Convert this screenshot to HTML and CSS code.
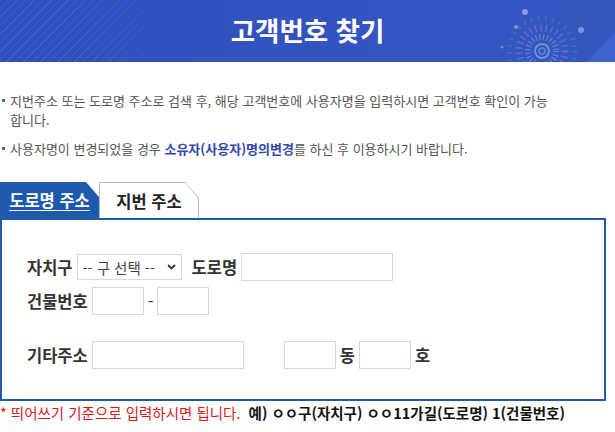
FILE: index.html
```html
<!DOCTYPE html>
<html lang="ko">
<head>
    <meta charset="UTF-8">
    <meta name="viewport" content="width=device-width, initial-scale=1.0">
    <title>고객번호 찾기</title>
    <link rel="stylesheet" href="styles.css">
</head>
<body>

<div class="top-title">
    <h1>고객번호 찾기</h1>
    <svg class="burst" width="120" height="62" viewBox="0 0 120 62">
        <g fill="none" stroke="#9fb2ee">
            <circle cx="62" cy="51" r="7" stroke-width="2" opacity=".6"/>
            <circle cx="62" cy="51" r="3" stroke-width="1.5" opacity=".5"/>
            <circle cx="62" cy="51" r="14" stroke-width="6" stroke-dasharray="1.3 2.4" opacity=".45"/>
            <circle cx="62" cy="51" r="23" stroke-width="7" stroke-dasharray="1.3 4" opacity=".35"/>
            <circle cx="62" cy="51" r="33" stroke-width="5" stroke-dasharray="1.2 6" opacity=".25"/>
        </g>
        <g fill="#a9baf0">
            <circle cx="45" cy="12" r="3" opacity=".7"/>
            <circle cx="101" cy="30" r="3" opacity=".6"/>
            <circle cx="36" cy="27" r="2" opacity=".6"/>
            <circle cx="22" cy="47" r="1.5" opacity=".5"/>
        </g>
    </svg>
</div>

<ul class="guide">
    <li>지번주소 또는 도로명 주소로 검색 후, 해당 고객번호에 사용자명을 입력하시면 고객번호 확인이 가능 합니다.</li>
    <li>사용자명이 변경되었을 경우 <a href="#">소유자(사용자)명의변경</a>를 하신 후 이용하시기 바랍니다.</li>
</ul>

<div class="tabs">
    <a href="#" class="tab tab-on">도로명 주소</a>
    <a href="#" class="tab tab-off"><span>지번 주소</span></a>
</div>

<div class="search-box">
    <div class="row">
        <label>자치구</label>
        <div class="select-wrap">
            <select class="gu">
                <option>-- 구 선택 --</option>
            </select>
            <svg class="arrow" width="9" height="6" viewBox="0 0 9 6"><path d="M1 1l3.5 3.5L8 1" fill="none" stroke="#333" stroke-width="1.8"/></svg>
        </div>
        <label class="ml">도로명</label>
        <input type="text" class="w-long">
    </div>
    <div class="row">
        <label>건물번호</label>
        <input type="text" class="w-short">
        <span class="dash">-</span>
        <input type="text" class="w-short">
    </div>
    <div class="row row-etc">
        <label>기타주소</label>
        <input type="text" class="w-long">
        <input type="text" class="w-short gap-big">
        <span>동</span>
        <input type="text" class="w-short">
        <span>호</span>
    </div>
</div>

<p class="note"><span class="red">* 띄어쓰기 기준으로 입력하시면 됩니다.</span> <b>예) ㅇㅇ구(자치구) ㅇㅇ11가길(도로명) 1(건물번호)</b></p>

</body>
</html>
```

FILE: styles.css
```css
body {
    margin: 0;
    font-family: "Noto Sans CJK KR", "Malgun Gothic", sans-serif;
    color: #444;
    background: #fff;
}
.top-title {
    position: relative;
    height: 62px;
    display: flex;
    justify-content: center;
    align-items: center;
    background: linear-gradient(to right, #2e4fbf, #3454c0 60%, #3555bf);
    overflow: hidden;
}
.top-title::before {
    content: "";
    position: absolute;
    left: 0;
    top: 0;
    width: 180px;
    height: 62px;
    background: repeating-linear-gradient(135deg, rgba(255,255,255,.09) 0 1px, transparent 1px 6px);
    -webkit-mask-image: linear-gradient(to right, #000 40%, transparent);
    mask-image: linear-gradient(to right, #000 40%, transparent);
}
.top-title::after {
    content: "";
    position: absolute;
    right: 0;
    bottom: 0;
    width: 28px;
    height: 30px;
    background: #3d63cc;
    clip-path: polygon(100% 0, 100% 100%, 0 100%);
}
.top-title h1 {
    margin: 0 0 4px 0;
    font-size: 26.5px;
    font-weight: bold;
    color: #fff;
}
.burst {
    position: absolute;
    left: 480px;
    top: 0;
}

.guide {
    list-style: none;
    margin: 29px 0 0 0;
    padding: 0 40px 0 10px;
    font-size: 13px;
    line-height: 19px;
    color: #555;
    word-break: keep-all;
}
.guide li {
    position: relative;
    margin-bottom: 10px;
}
.guide li::before {
    content: "";
    position: absolute;
    left: -8px;
    top: 8px;
    width: 3px;
    height: 3px;
    background: #3b63c9;
}
.guide a {
    color: #3347ad;
    font-weight: bold;
    text-decoration: none;
}

.tabs {
    display: flex;
    margin-top: 24px;
    height: 36px;
}
.tab {
    display: flex;
    align-items: center;
    justify-content: center;
    width: 100px;
    height: 36px;
    font-size: 16.5px;
    font-weight: bold;
    text-decoration: none;
    clip-path: polygon(0 0, 86px 0, 100% 15px, 100% 100%, 0 100%);
}
.tab-on {
    width: 99px;
    background: #1d5aad;
    color: #fff;
    text-decoration: underline;
    text-underline-offset: 3px;
}
.tab-off {
    box-sizing: border-box;
    padding: 1px 1px 0 1px;
    background: #bcbcbc;
    color: #222;
    clip-path: polygon(0 0, 86px 0, 100% 16px, 100% 100%, 0 100%);
}
.tab-off span {
    display: flex;
    align-items: center;
    justify-content: center;
    width: 100%;
    height: 100%;
    padding-top: 1px;
    background: #fff;
    clip-path: polygon(0 0, 85px 0, 100% 16px, 100% 100%, 0 100%);
}

.search-box {
    border: 2px solid #1e5bac;
    padding: 33px 0 30px 25px;
    box-sizing: border-box;
    width: 606px;
}
.row {
    display: flex;
    align-items: center;
    gap: 4px;
    margin-bottom: 6px;
    font-size: 16.5px;
    font-weight: bold;
    color: #333;
}
.row:last-child {
    margin-bottom: 0;
}
.row-etc {
    margin-top: 26px;
}
.row label {
    white-space: nowrap;
}
.ml {
    margin-left: 6px;
}
.row input {
    box-sizing: border-box;
    height: 28px;
    border: 1px solid #d9d9d9;
    padding: 0 5px;
    margin: 0;
}
.w-long {
    width: 152px;
}
.w-short {
    width: 52px;
}
.gap-big {
    margin-left: 36px !important;
}
.dash {
    font-weight: normal;
}
.select-wrap {
    position: relative;
}
.gu {
    -webkit-appearance: none;
    appearance: none;
    box-sizing: border-box;
    width: 105px;
    height: 26px;
    border: 1px solid #d9d9d9;
    background: #fff;
    padding: 0 0 0 5px;
    font-family: inherit;
    font-size: 14.5px;
    color: #444;
    display: block;
}
.arrow {
    position: absolute;
    right: 6px;
    top: 10px;
}

.note {
    margin: 3px 0 0 0;
    font-size: 14.5px;
    line-height: 18px;
    color: #111;
    white-space: nowrap;
}
.note .red {
    color: #d9191c;
}
.note b {
    margin-left: 4px;
}
```
